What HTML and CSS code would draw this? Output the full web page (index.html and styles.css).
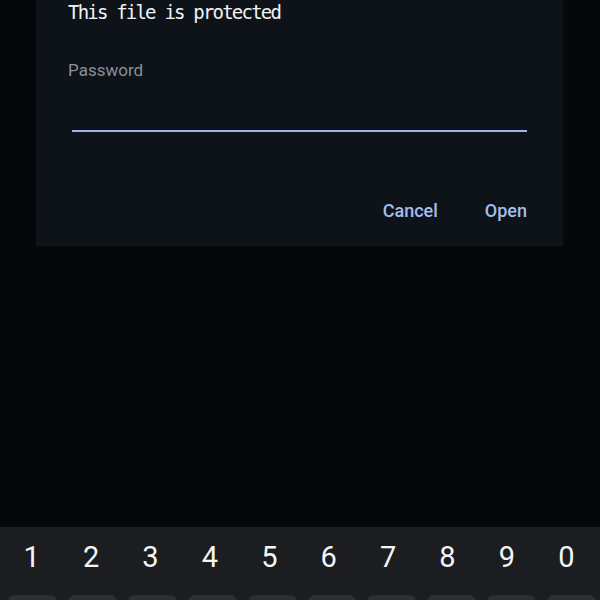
FILE: index.html
```html
<!DOCTYPE html>
<html lang="en">
<head>
    <meta charset="UTF-8">
    <meta name="viewport" content="width=device-width, initial-scale=1.0">
    <title>This file is protected</title>
    <link rel="stylesheet" href="styles.css">
</head>
<body>
    <div class="tela">
        <div class="dialogo">
            <h1 class="titulo">This file is protected</h1>
            <label class="rotulo" for="senha">Password</label>
            <div class="campo" id="senha"></div>
            <div class="botoes">
                <button class="botao">Cancel</button>
                <button class="botao">Open</button>
            </div>
        </div>
    </div>

    <div class="teclado">
        <div class="numeros">
            <span>1</span><span>2</span><span>3</span><span>4</span><span>5</span>
            <span>6</span><span>7</span><span>8</span><span>9</span><span>0</span>
        </div>
        <div class="teclas">
            <span></span><span></span><span></span><span></span><span></span>
            <span></span><span></span><span></span><span></span><span></span>
        </div>
    </div>
</body>
</html>
```

FILE: styles.css
```css
body {
    margin: 0;
    background: #05070a;
    font-family: Roboto, "Noto Sans", sans-serif;
    height: 600px;
    overflow: hidden;
    display: flex;
    flex-direction: column;
}

.tela {
    flex: 1;
}

.dialogo {
    margin-left: 36px;
    width: 527px;
    background: #0e131a;
    padding: 0 36px 0 32px;
    box-sizing: border-box;
    height: 246px;
    display: flex;
    flex-direction: column;
}

.titulo {
    margin: 0;
    font-family: "DejaVu Sans Mono", monospace;
    font-weight: normal;
    font-size: 19px;
    letter-spacing: -1.8px;
    line-height: 24px;
    color: #f2f3f5;
}

.rotulo {
    margin-top: 34px;
    font-size: 17px;
    line-height: 24px;
    color: #8b9097;
}

.campo {
    margin: 48px 0 0 4px;
    height: 2px;
    background: #9fb6e6;
}

.botoes {
    display: flex;
    justify-content: flex-end;
    gap: 47px;
    margin-top: 67px;
}

.botao {
    background: none;
    border: none;
    padding: 0;
    font-family: Roboto, sans-serif;
    font-size: 18px;
    font-weight: 500;
    line-height: 24px;
    color: #a6bde8;
    cursor: pointer;
}

.teclado {
    height: 73px;
    background: #1b1d21;
    padding: 0 4px 0 2px;
}

.numeros {
    display: grid;
    grid-template-columns: repeat(10, 1fr);
    height: 60px;
    padding-bottom: 8px;
    align-items: center;
}

.numeros span {
    text-align: center;
    font-size: 29px;
    color: #f4f5f6;
}

.teclas {
    display: grid;
    grid-template-columns: repeat(10, 1fr);
    gap: 11px;
    padding-left: 6px;
}

.teclas span {
    height: 20px;
    background: #2c2f34;
    border-radius: 7px;
}
```
